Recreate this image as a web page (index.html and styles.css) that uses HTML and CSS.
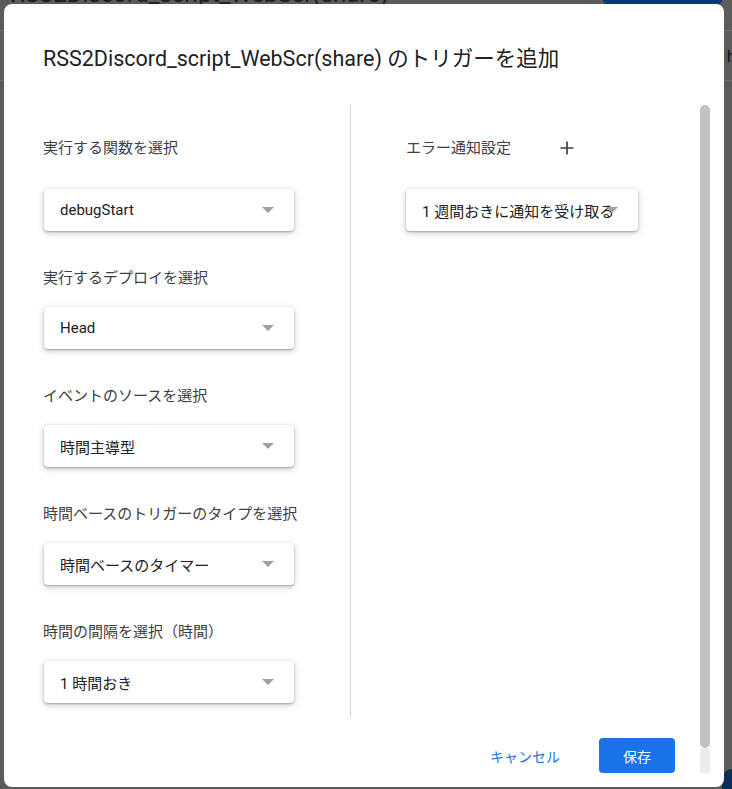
FILE: index.html
```html
<!DOCTYPE html>
<html lang="ja">
<head>
<meta charset="utf-8">
<title>トリガーを追加</title>
<link rel="stylesheet" href="styles.css">
</head>
<body>
<div class="backdrop">
  <div class="bg-header">
    <span class="bg-title">RSS2Discord_script_WebScr(share)</span>
    <span class="bg-btn"></span>
  </div>
  <div class="bg-toolbar"><span class="bg-h">h</span></div>
  <div class="bg-fab"></div>
</div>

<div class="dialog">
  <h1 class="dialog-title">RSS2Discord_script_WebScr(share) のトリガーを追加</h1>
  <div class="dialog-body">
    <div class="content">
      <div class="columns">
        <div class="col col-left">
          <div class="field">
            <div class="field-head"><span class="label">実行する関数を選択</span></div>
            <div class="select"><span class="select-text">debugStart</span></div>
          </div>
          <div class="field">
            <div class="label-row"><span class="label">実行するデプロイを選択</span></div>
            <div class="select"><span class="select-text">Head</span></div>
          </div>
          <div class="field">
            <div class="label-row"><span class="label">イベントのソースを選択</span></div>
            <div class="select"><span class="select-text">時間主導型</span></div>
          </div>
          <div class="field">
            <div class="label-row"><span class="label">時間ベースのトリガーのタイプを選択</span></div>
            <div class="select"><span class="select-text">時間ベースのタイマー</span></div>
          </div>
          <div class="field">
            <div class="label-row"><span class="label">時間の間隔を選択（時間）</span></div>
            <div class="select"><span class="select-text">1 時間おき</span></div>
          </div>
        </div>
        <div class="col col-right">
          <div class="field">
            <div class="field-head">
              <span class="label">エラー通知設定</span>
              <button class="add-btn" type="button" aria-label="追加">
                <svg width="16" height="16" viewBox="0 0 16 16"><path d="M8 1.5v13M1.5 8h13" stroke="#3c4043" stroke-width="1.7" fill="none"/></svg>
              </button>
            </div>
            <div class="select select-wide"><span class="select-text">1 週間おきに通知を受け取る</span></div>
          </div>
        </div>
      </div>
      <div class="footer">
        <button class="btn-text" type="button">キャンセル</button>
        <button class="btn-primary" type="button">保存</button>
      </div>
    </div>
    <div class="scrollbar"><div class="thumb"></div><div class="track"></div></div>
  </div>
</div>
</body>
</html>
```

FILE: styles.css
```css
html, body {
  margin: 0;
  padding: 0;
}
body {
  width: 732px;
  height: 789px;
  overflow: hidden;
  background: #5b5b5b;
  font-family: Roboto, "Noto Sans CJK JP", sans-serif;
  position: relative;
}

/* page behind the modal scrim */
.backdrop {
  height: 100%;
}
.bg-header {
  height: 30px;
  border-bottom: 1px solid #6f6f6f;
  display: flex;
  justify-content: space-between;
  align-items: flex-start;
}
.bg-title {
  margin-top: -18px;
  margin-left: 10px;
  font-size: 24px;
  line-height: 24px;
  color: #1c1c1c;
}
.bg-btn {
  width: 119px;
  height: 36px;
  margin-top: -32px;
  margin-right: 10px;
  background: #0b3a72;
  border-radius: 4px;
}
.bg-toolbar {
  height: 49px;
  border-bottom: 1px solid #6f6f6f;
  display: flex;
  justify-content: flex-end;
  align-items: center;
}
.bg-h {
  font-size: 17px;
  color: #111;
  margin-right: -4px;
}
.bg-fab {
  position: absolute;
  right: -30px;
  bottom: -30px;
  width: 40px;
  height: 50px;
  border-radius: 10px;
  background: #0b2f57;
}

/* dialog */
.dialog {
  position: absolute;
  left: 4px;
  top: 4px;
  width: 720px;
  height: 783px;
  box-sizing: border-box;
  padding: 0 14px 14px 39px;
  background: #fff;
  border-radius: 8px;
  display: flex;
  flex-direction: column;
}
.dialog-title {
  margin: 0;
  height: 101px;
  box-sizing: border-box;
  padding-top: 43px;
  font-size: 21.5px;
  line-height: 24px;
  font-weight: 400;
  color: #202124;
  white-space: nowrap;
  flex: none;
}
.dialog-body {
  height: 668px;
  flex: none;
  display: flex;
}
.content {
  flex: 1;
  display: flex;
  flex-direction: column;
}
.columns {
  height: 612px;
  display: flex;
  flex: none;
}
.col {
  box-sizing: border-box;
  padding-top: 27px;
  display: flex;
  flex-direction: column;
}
.col-left {
  width: 308px;
  border-right: 1px solid #d3d3d3;
}
.col-right {
  flex: 1;
  padding-left: 55px;
}
.field {
  display: flex;
  flex-direction: column;
}
.field + .field {
  margin-top: 37px;
}
.field-head {
  height: 32px;
  margin-bottom: 25px;
  display: flex;
  align-items: center;
}
.label-row {
  height: 20px;
  margin-bottom: 19px;
  display: flex;
  align-items: center;
}
.label {
  font-size: 15px;
  line-height: 20px;
  color: #3c4043;
  white-space: nowrap;
}
.add-btn {
  margin-left: 36px;
  width: 40px;
  height: 32px;
  padding: 0;
  border: none;
  background: transparent;
  display: flex;
  align-items: center;
  justify-content: center;
}
.select {
  position: relative;
  width: 250px;
  height: 42px;
  margin-left: 1px;
  box-sizing: border-box;
  padding: 0 16px;
  display: flex;
  align-items: center;
  border-radius: 4px;
  background: #fff;
  box-shadow: 0 1px 2px rgba(0, 0, 0, 0.28), 0 2px 6px 1px rgba(0, 0, 0, 0.16);
  font-size: 15px;
  color: #202124;
  white-space: nowrap;
}
.select::after {
  content: "";
  position: absolute;
  right: 20px;
  top: 18px;
  border-left: 6px solid transparent;
  border-right: 6px solid transparent;
  border-top: 6px solid #a0a0a0;
}
.select-wide {
  width: 232px;
  margin-left: 0;
}

.footer {
  display: flex;
  justify-content: flex-end;
  align-items: center;
  padding-top: 21px;
  padding-right: 25px;
}
.btn-text {
  height: 35px;
  padding: 0 8px;
  margin-right: 31px;
  border: none;
  background: transparent;
  color: #1a73e8;
  font-family: inherit;
  font-size: 14px;
}
.btn-primary {
  width: 76px;
  height: 35px;
  border: none;
  border-radius: 4px;
  background: #1a73e8;
  color: #fff;
  font-family: inherit;
  font-size: 14px;
}

.scrollbar {
  width: 10px;
  flex: none;
  display: flex;
  flex-direction: column;
}
.thumb {
  height: 643px;
  border-radius: 5px;
  background: #c1c1c1;
}
.track {
  flex: 1;
  background: #ececec;
}
```
